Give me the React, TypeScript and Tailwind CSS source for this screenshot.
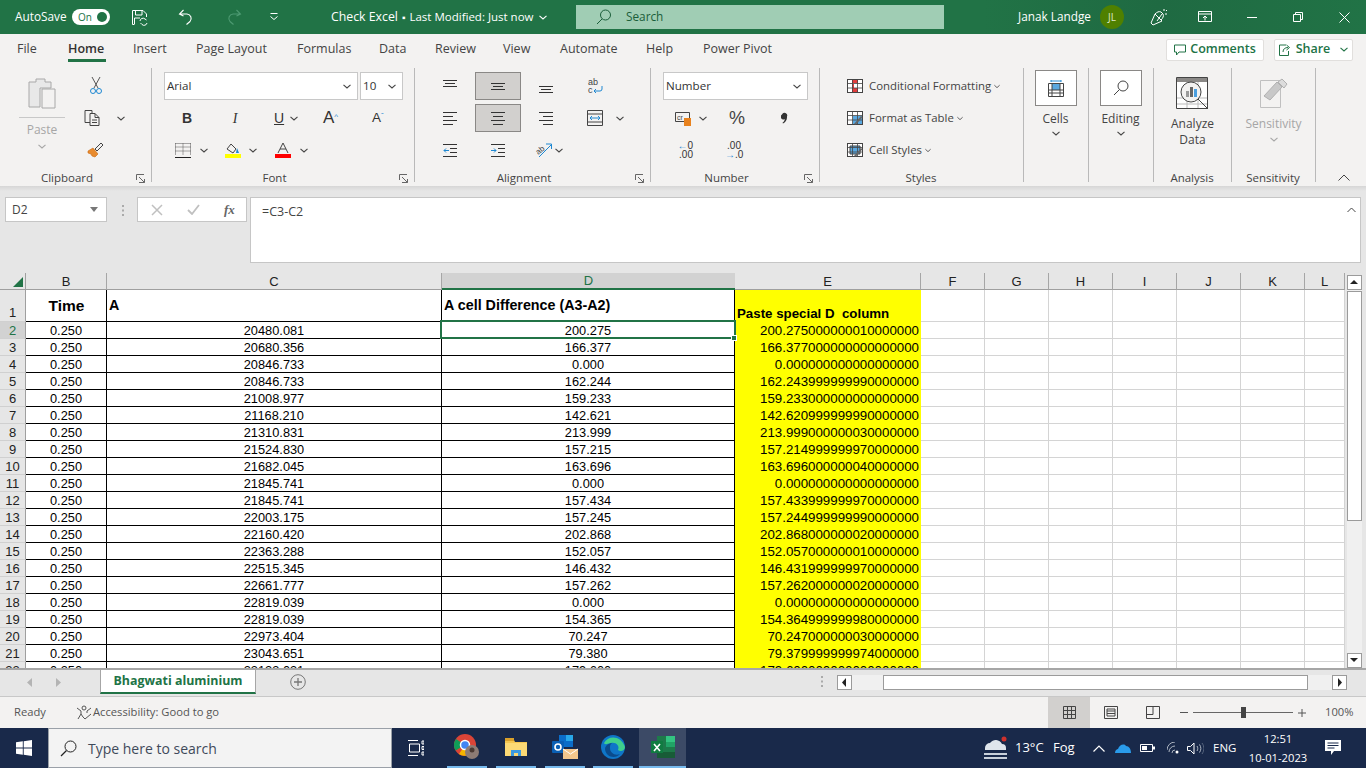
import type { ReactNode } from "react";

const CELLFONT = "font-['Liberation_Sans',Arial,sans-serif]";
const COLS = "grid grid-cols-[26px_81px_335px_293px_186px_64px_64px_64px_64px_64px_64px_40px]";

type Row = { n: number; c: string; d: string; e: string };

const ROWS: Row[] = [
	{ n: 2, c: "20480.081", d: "200.275", e: "200.275000000010000000" },
	{ n: 3, c: "20680.356", d: "166.377", e: "166.377000000000000000" },
	{ n: 4, c: "20846.733", d: "0.000", e: "0.000000000000000000" },
	{ n: 5, c: "20846.733", d: "162.244", e: "162.243999999990000000" },
	{ n: 6, c: "21008.977", d: "159.233", e: "159.233000000000000000" },
	{ n: 7, c: "21168.210", d: "142.621", e: "142.620999999990000000" },
	{ n: 8, c: "21310.831", d: "213.999", e: "213.999000000030000000" },
	{ n: 9, c: "21524.830", d: "157.215", e: "157.214999999970000000" },
	{ n: 10, c: "21682.045", d: "163.696", e: "163.696000000040000000" },
	{ n: 11, c: "21845.741", d: "0.000", e: "0.000000000000000000" },
	{ n: 12, c: "21845.741", d: "157.434", e: "157.433999999970000000" },
	{ n: 13, c: "22003.175", d: "157.245", e: "157.244999999990000000" },
	{ n: 14, c: "22160.420", d: "202.868", e: "202.868000000020000000" },
	{ n: 15, c: "22363.288", d: "152.057", e: "152.057000000010000000" },
	{ n: 16, c: "22515.345", d: "146.432", e: "146.431999999970000000" },
	{ n: 17, c: "22661.777", d: "157.262", e: "157.262000000020000000" },
	{ n: 18, c: "22819.039", d: "0.000", e: "0.000000000000000000" },
	{ n: 19, c: "22819.039", d: "154.365", e: "154.364999999980000000" },
	{ n: 20, c: "22973.404", d: "70.247", e: "70.247000000030000000" },
	{ n: 21, c: "23043.651", d: "79.380", e: "79.379999999974000000" },
	{ n: 22, c: "23123.031", d: "179.600", e: "179.600000000000000000" },
];

const TABS = [
	{ label: "File", cls: "w-[51px]" },
	{ label: "Home", cls: "w-[65px] font-semibold text-[#323130]" },
	{ label: "Insert", cls: "w-[63px]" },
	{ label: "Page Layout", cls: "w-[101px]" },
	{ label: "Formulas", cls: "w-[82px]" },
	{ label: "Data", cls: "w-[56px]" },
	{ label: "Review", cls: "w-[68px]" },
	{ label: "View", cls: "w-[57px]" },
	{ label: "Automate", cls: "w-[86px]" },
	{ label: "Help", cls: "w-[57px]" },
	{ label: "Power Pivot", cls: "w-[80px]" },
];

const Chev = ({ cls = "", color = "#444" }: { cls?: string; color?: string }) => (
	<svg width="8" height="5" viewBox="0 0 8 5" className={`shrink-0 ${cls}`}>
		<path d="M.5.8 4 4 7.500.8" fill="none" stroke={color} strokeWidth="1.100" />
	</svg>
);

const Launcher = () => (
	<svg width="9" height="9" viewBox="0 0 9 9">
		<path d="M.5 6V.5H8M8.500 8.500H3M3 3l5 5M8.500 5v3.500H5" fill="none" stroke="#666" />
	</svg>
);

const Lines = ({ cls = "", rows }: { cls?: string; rows: [number, number, number][] }) => (
	<svg width="14" height="13" viewBox="0 0 14 13" className={`shrink-0 ${cls}`}>
		{rows.map(([y, a, b]) => (
			<path key={y} d={`M${a} ${y}.5H${b}`} stroke="#333" />
		))}
	</svg>
);

const TOP: [number, number, number][] = [[0, 0, 14], [3, 2, 12], [6, 0, 14]];
const MID: [number, number, number][] = [[3, 0, 14], [6, 2, 12], [9, 0, 14]];
const BOT: [number, number, number][] = [[6, 0, 14], [9, 2, 12], [12, 0, 14]];
const LEFT: [number, number, number][] = [[0, 0, 14], [4, 0, 10], [8, 0, 14], [12, 0, 10]];
const CENTER: [number, number, number][] = [[0, 0, 14], [4, 2, 12], [8, 0, 14], [12, 2, 12]];
const RIGHT: [number, number, number][] = [[0, 0, 14], [4, 4, 14], [8, 0, 14], [12, 4, 14]];

const Indent = ({ cls = "", out }: { cls?: string; out?: boolean }) => (
	<svg width="14" height="13" viewBox="0 0 14 13" className={`shrink-0 ${cls}`}>
		<path d="M0 .5h14M7 4.500h7M7 8.500h7M0 12.500h14" stroke="#333" />
		<path d={out ? "M6 6.500H1M3 4.500l-2 2 2 2" : "M0 6.500h5M3 4.500l2 2-2 2"} fill="none" stroke="#1e88d2" />
	</svg>
);

const StyleIcon = ({ kind }: { kind: "cond" | "table" | "cell" }) => (
	<svg width="16" height="14" viewBox="0 0 16 14" className="shrink-0">
		<rect x=".5" y=".5" width="15" height="13" fill="#fff" stroke="#444" />
		{kind === "cond" && <path d="M5 1h6v3H5zM5 5h2v4H5zM5 9h6v4H5z" fill="#e23c3c" />}
		{kind === "table" && <path d="M6 5h9v8H6z" fill="#5aa8e0" />}
		{kind === "cell" && <path d="M3 3h10v8H3z" fill="#5aa8e0" stroke="#444" />}
		<path d="M.5 4.500h15M.5 9h15M5.500.5v13M10.500.5v13" stroke="#444" strokeWidth=".8" />
		{kind !== "cond" && <path d="M7 13 14 5l1.500 1.300L9 13.500z" fill="#666" />}
	</svg>
);

const Group = ({ cls, label, launcher, children }: { cls: string; label: string; launcher?: boolean; children: ReactNode }) => (
	<div className={`flex shrink-0 flex-col border-r border-[#b9b9b9] ${cls}`}>
		<div className="min-h-0 flex-1">{children}</div>
		<div className="flex h-[16px] translate-y-[4px] items-center pr-[3px] pl-[2px] text-[11.500px] leading-none text-[#444]">
			<span className="flex-1 text-center">{label}</span>
			{launcher && (
				<span className="flex w-[16px] justify-center">
					<Launcher />
				</span>
			)}
		</div>
	</div>
);

const RibbonRow = ({ children, cls = "" }: { children: ReactNode; cls?: string }) => (
	<div className={`flex h-[28px] items-center ${cls}`}>{children}</div>
);

const Select = ({ text, cls }: { text: string; cls: string }) => (
	<div className={`flex h-[28px] items-center justify-between border border-[#c8c8c8] bg-white pr-[6px] pl-[2px] text-[11.600px] text-[#333] ${cls}`}>
		<span>{text}</span>
		<Chev />
	</div>
);

const ScrollBtn = ({ dir, cls }: { dir: "up" | "down" | "left" | "right"; cls: string }) => {
	const pts = { up: "1,6 9,6 5,2", down: "1,2 9,2 5,6", left: "6,0 6,9 2,4.500", right: "3,0 3,9 7,4.500" }[dir];
	return (
		<div className={`flex shrink-0 items-center justify-center border border-[#9b9b9b] bg-white ${cls}`}>
			<svg width="10" height="9" viewBox="0 0 10 9">
				<polygon points={pts} fill="#222" />
			</svg>
		</div>
	);
};

const TitleBar = () => (
	<div className="flex h-[34px] shrink-0 items-center bg-[linear-gradient(90deg,#217346_72%,#1f6a42_85%,#217346_100%)] text-[11.800px] text-white [&>*]:shrink-0">
		<span className="ml-[15px] w-[57px]">AutoSave</span>
		<div className="flex h-[16px] w-[38px] items-center justify-between rounded-full bg-white pr-[3px] pl-[6px] text-[10px] text-[#217346]">
			<span>On</span>
			<span className="size-[10px] rounded-full bg-[#217346]" />
		</div>
		<svg width="17" height="17" viewBox="0 0 17 17" className="ml-[21px]">
			<path d="M3.500 15.500H1.500V1.500H12L15.500 5V8M4.500 1.500V6H11V1.500M3.500 15V9H9" fill="none" stroke="#fff" />
			<path d="M9 12a3 3 0 0 1 5-2l1.500 1M16 14a3 3 0 0 1-5 1.500L9.500 14" fill="none" stroke="#fff" />
		</svg>
		<svg width="16" height="16" viewBox="0 0 16 16" className="ml-[30px]">
			<path d="M5.500 1 1.500 5l4 2M2 5h7a4.500 4.500 0 0 1 3 7.500L8.500 15.500" fill="none" stroke="#fff" strokeWidth="1.100" />
		</svg>
		<svg width="16" height="16" viewBox="0 0 16 16" className="ml-[32px]">
			<path d="M10.500 1l4 4-4 2M14 5H7a4.500 4.500 0 0 0-3 7.500l3.500 3" fill="none" stroke="#4d9a72" strokeWidth="1.100" />
		</svg>
		<svg width="8" height="8" viewBox="0 0 8 8" className="ml-[28px]">
			<path d="M.5.500h7M.5 3.500 4 6.500l3.500-3" fill="none" stroke="#fff" />
		</svg>
		<div className="ml-[53px] flex w-[245px] items-center whitespace-nowrap">
			<span className="text-[12.300px]">Check Excel</span>
			<span className="mx-[4px] text-[10px]">▪</span>
			<span className="text-[11.500px]">Last Modified: Just now</span>
			<Chev cls="ml-[4px] w-[10px]" color="#fff" />
		</div>
		<div className="flex h-[24px] w-[368px] items-center bg-[#a0cdb4] text-[#1b5e3a]">
			<svg width="16" height="16" viewBox="0 0 16 16" className="ml-[20px]">
				<circle cx="9.500" cy="6" r="5" fill="none" stroke="#1b5e3a" />
				<path d="M6 10 1 15" stroke="#1b5e3a" />
			</svg>
			<span className="ml-[14px]">Search</span>
		</div>
		<span className="ml-[74px] w-[82px]">Janak Landge</span>
		<span className="flex size-[24px] items-center justify-center rounded-full bg-[#4f8000] text-[10px] text-[#dfe8c8]">JL</span>
		<svg width="18" height="18" viewBox="0 0 18 18" className="ml-[26px]">
			<path d="M1 15 5 6l7 7-9 4zM5 6c2-2 4-3 6-2l2 2c1 2 0 4-2 6M7 13l5-7" fill="none" stroke="#fff" />
			<path d="M14 1v2M16 3l1-1M15 6h2" stroke="#fff" />
		</svg>
		<svg width="14" height="12" viewBox="0 0 14 12" className="ml-[30px]">
			<path d="M.5.500h13v10H.5zM.5 3h13M7 9.500V5M5 7l2-2 2 2" fill="none" stroke="#fff" />
		</svg>
		<span className="ml-[35px] h-px w-[10px] bg-white" />
		<svg width="10" height="10" viewBox="0 0 10 10" className="ml-[36px]">
			<path d="M.5 2.500h7v7h-7zM2.500 2.500v-2h7v7h-2" fill="none" stroke="#fff" />
		</svg>
		<svg width="11" height="11" viewBox="0 0 11 11" className="ml-[36px]">
			<path d="M.5.500l10 10M10.500.5l-10 10" stroke="#fff" />
		</svg>
	</div>
);

const TabRow = () => (
	<div className="flex h-[31px] shrink-0 items-center bg-[#f3f2f1] pl-[17px] text-[12.500px] text-[#444]">
		{TABS.map((t) => (
			<span key={t.label} className={`relative flex h-full shrink-0 items-center ${t.cls}`}>
				{t.label}
				{t.label === "Home" && <span className="absolute bottom-[3px] left-0 h-[3px] w-[38px] bg-[#217346]" />}
			</span>
		))}
		<div className="ml-[383px] flex h-[22px] w-[98px] shrink-0 items-center justify-center gap-[4px] rounded-[2px] border border-[#e1dfdd] bg-white font-semibold text-[#217346]">
			<svg width="12" height="12" viewBox="0 0 12 12">
				<path d="M.5 1h11v7H5L2.500 11V8h-2z" fill="none" stroke="#217346" />
			</svg>
			Comments
		</div>
		<div className="ml-[10px] flex h-[22px] w-[79px] shrink-0 items-center justify-center gap-[5px] rounded-[2px] border border-[#e1dfdd] bg-white font-semibold text-[#217346]">
			<svg width="12" height="12" viewBox="0 0 12 12">
				<path d="M7 1H.5v10.500h9V7M4 8c0-3 2-4.500 5-4.500M7.500 1 10.500 3.500 7.500 6" fill="none" stroke="#217346" />
			</svg>
			Share
			<Chev cls="ml-[5px]" color="#217346" />
		</div>
	</div>
);

const Ribbon = () => (
	<div className="flex h-[121px] shrink-0 bg-[#f3f2f1] pt-[3px] pb-[4px] text-[#333]">
		<Group cls="w-[152px]" label="Clipboard" launcher>
			<div className="flex">
				<div className="flex w-[84px] flex-col items-center pt-[10px] text-[#a6a6a6]">
					<svg width="28" height="32" viewBox="0 0 28 32">
						<path d="M1 4h7V1h9v3h6v6H12v19H1z" fill="#e8e8e8" stroke="#a8a8a8" />
						<path d="M14 11h13v19H14z" fill="#f3f2f1" stroke="#a8a8a8" />
					</svg>
					<span className="mt-[7px] h-px w-[46px] bg-[#c8c8c8]" />
					<span className="mt-[5px] text-[12px] leading-[14px]">Paste</span>
					<Chev cls="mt-[7px]" color="#a6a6a6" />
				</div>
				<div className="flex flex-col gap-[4px] pt-[4px]">
					<RibbonRow>
						<svg width="12" height="18" viewBox="0 0 12 18" className="ml-[6px]">
							<path d="M2 0l6 11M10 0 4 11" stroke="#555" />
							<circle cx="3" cy="14" r="2.500" fill="none" stroke="#1e88d2" />
							<circle cx="9" cy="14" r="2.500" fill="none" stroke="#1e88d2" />
						</svg>
					</RibbonRow>
					<RibbonRow>
						<svg width="16" height="16" viewBox="0 0 16 16">
							<path d="M6 12.500H1V.5h7v3M6 3.500h5l4 4v8H6zM11 3.500v4h4M8 10h5M8 12.500h5" fill="none" stroke="#444" />
						</svg>
						<Chev cls="ml-[17px]" />
					</RibbonRow>
					<RibbonRow>
						<svg width="16" height="16" viewBox="0 0 16 16" className="ml-[3px]">
							<path d="M1 9l5-3 5 6-3 3-3-1-1-2-3-1z" fill="#e88b2e" stroke="#c96a10" strokeWidth=".6" />
							<path d="M8 7l6-6 2 2-6 6z" fill="none" stroke="#444" />
						</svg>
					</RibbonRow>
				</div>
			</div>
		</Group>

		<Group cls="w-[263px]" label="Font" launcher>
			<div className="flex flex-col gap-[4px] pt-[4px]">
				<div className="flex gap-[2px] pl-[12px]">
					<Select text="Arial" cls="w-[194px]" />
					<Select text="10" cls="w-[43px]" />
				</div>
				<RibbonRow cls="text-[14px]">
					<span className={`ml-[30px] w-[10px] text-center font-bold ${CELLFONT}`}>B</span>
					<span className="ml-[38px] w-[10px] text-center font-['Liberation_Serif',serif] italic">I</span>
					<span className={`ml-[34px] w-[10px] text-center underline ${CELLFONT}`}>U</span>
					<Chev cls="ml-[6px]" />
					<span className={`ml-[25px] w-[20px] text-[17px] ${CELLFONT}`}>
						A<sup className="text-[8px] text-[#1e88d2]">^</sup>
					</span>
					<span className={`ml-[29px] w-[20px] text-[13.500px] ${CELLFONT}`}>
						A<sup className="text-[8px] text-[#1e88d2]">ˇ</sup>
					</span>
				</RibbonRow>
				<RibbonRow>
					<svg width="16" height="15" viewBox="0 0 16 15" className="ml-[23px]">
						<path d="M.5.500h15M.5 4h15M.5 8h15M8 .5v12M.5.500v12M15.500.5v12" fill="none" stroke="#555" strokeDasharray="1 1" />
						<path d="M0 14.500h16" stroke="#222" />
					</svg>
					<Chev cls="ml-[9px]" />
					<svg width="16" height="16" viewBox="0 0 16 16" className="ml-[17px]">
						<path d="M2 7 6 2l5 5-3 4z" fill="none" stroke="#444" />
						<path d="M12 6l2 5h-3z" fill="#1e88d2" />
						<rect y="12" width="16" height="4" fill="#ffff00" />
					</svg>
					<Chev cls="ml-[8px]" />
					<svg width="16" height="16" viewBox="0 0 16 16" className="ml-[18px]">
						<path d="M3 11 8 1l5 10M5 7h6" fill="none" stroke="#444" />
						<rect y="12" width="16" height="4" fill="#ff0000" />
					</svg>
					<Chev cls="ml-[9px]" />
				</RibbonRow>
			</div>
		</Group>

		<Group cls="w-[236px]" label="Alignment" launcher>
			<div className="flex flex-col gap-[4px] pt-[4px]">
				<RibbonRow>
					<Lines cls="ml-[28px]" rows={TOP} />
					<div className="ml-[18px] flex h-[28px] w-[46px] items-center justify-center border border-[#8a8886] bg-[#d2d0ce]">
						<Lines rows={MID} />
					</div>
					<Lines cls="ml-[18px]" rows={BOT} />
					<svg width="16" height="16" viewBox="0 0 16 16" className="ml-[34px]">
						<text x="1" y="7" fontSize="9" fill="#444" fontFamily="Liberation Sans">ab</text>
						<text x="1" y="15" fontSize="9" fill="#444" fontFamily="Liberation Sans">c</text>
						<path d="M15 8v3a2 2 0 0 1-2 2H7M9 11l-2 2 2 2" fill="none" stroke="#1e88d2" />
					</svg>
				</RibbonRow>
				<RibbonRow>
					<Lines cls="ml-[28px]" rows={LEFT} />
					<div className="ml-[18px] flex h-[28px] w-[46px] items-center justify-center border border-[#8a8886] bg-[#d2d0ce]">
						<Lines rows={CENTER} />
					</div>
					<Lines cls="ml-[18px]" rows={RIGHT} />
					<svg width="16" height="16" viewBox="0 0 16 16" className="ml-[34px]">
						<path d="M.5.500h15v15H.5zM.5 4h15M.5 12h15" fill="none" stroke="#444" />
						<path d="M3 8h10M5 6 3 8l2 2M11 6l2 2-2 2" fill="none" stroke="#1e88d2" />
					</svg>
					<Chev cls="ml-[13px]" />
				</RibbonRow>
				<RibbonRow>
					<Indent cls="ml-[28px]" out />
					<Indent cls="ml-[34px]" />
					<svg width="18" height="16" viewBox="0 0 18 16" className="ml-[30px]">
						<text x="1" y="11" fontSize="8" fill="#444" fontFamily="Liberation Sans" transform="rotate(-40 5 9)">ab</text>
						<path d="M4 15 16 3M11 2h5.500v5" fill="none" stroke="#1e88d2" />
					</svg>
					<Chev cls="ml-[2px]" />
				</RibbonRow>
			</div>
		</Group>

		<Group cls="w-[169px]" label="Number" launcher>
			<div className="flex flex-col gap-[4px] pt-[4px]">
				<div className="pl-[12px]">
					<Select text="Number" cls="w-[145px]" />
				</div>
				<RibbonRow>
					<svg width="17" height="15" viewBox="0 0 17 15" className="ml-[24px]">
						<path d="M.5 1.500h14v9H.5z" fill="none" stroke="#444" />
						<text x="2" y="9" fontSize="7" fill="#444" fontFamily="Liberation Sans">cr</text>
						<path d="M9 7h7v8H9z" fill="#e8821e" />
					</svg>
					<Chev cls="ml-[7px]" />
					<span className={`ml-[22px] w-[16px] text-center text-[18px] text-[#444] ${CELLFONT}`}>%</span>
					<svg width="8" height="13" viewBox="0 0 8 13" className="ml-[36px]">
						<path d="M1 2.500a2.500 2.500 0 1 1 5 2c.3 3-1.500 5.500-4 7l-.5-.8c1.500-1 2-2 2.300-3.700A2.500 2.500 0 0 1 1 2.500z" fill="#333" />
					</svg>
				</RibbonRow>
				<RibbonRow cls="text-[10px] leading-[9px] text-[#333]">
					<div className={`ml-[26px] w-[16px] text-right ${CELLFONT}`}>
						<span className="text-[#1e88d2]">←</span>0
						<br />
						.00
					</div>
					<div className={`ml-[32px] w-[16px] text-right ${CELLFONT}`}>
						.00
						<br />
						<span className="text-[#1e88d2]">→</span>.0
					</div>
				</RibbonRow>
			</div>
		</Group>

		<Group cls="w-[204px]" label="Styles">
			<div className="flex flex-col gap-[4px] pt-[4px] text-[11.400px] text-[#444]">
				{[
					{ t: "Conditional Formatting", k: "cond" as const },
					{ t: "Format as Table", k: "table" as const },
					{ t: "Cell Styles", k: "cell" as const },
				].map((s) => (
					<RibbonRow key={s.t} cls="pl-[27px]">
						<StyleIcon kind={s.k} />
						<span className="ml-[6px] whitespace-nowrap">{s.t}</span>
						<Chev cls="ml-[3px] w-[6px]" />
					</RibbonRow>
				))}
			</div>
		</Group>

		<Group cls="w-[65px]" label="">
			<div className="flex flex-col items-center pt-[2px] pr-[1px] text-[12px] text-[#444]">
				<div className="flex h-[36px] w-[42px] items-center justify-center border border-[#8a8886] bg-white">
					<svg width="16" height="17" viewBox="0 0 16 17">
						<path d="M3 1h10M3 0v2M13 0v2" stroke="#1e88d2" />
						<path d="M4 4h8v6H4z" fill="#5aa8e0" />
						<path d="M.5 3.500h15v13H.5zM.5 10h15M.5 13h15M4 3.500v13M12 3.500v13" fill="none" stroke="#444" />
					</svg>
				</div>
				<span className="mt-[6px] leading-[14px]">Cells</span>
				<Chev cls="mt-[5px]" />
			</div>
		</Group>

		<Group cls="w-[65px]" label="">
			<div className="flex flex-col items-center pt-[2px] pr-[1px] text-[12px] text-[#444]">
				<div className="flex h-[36px] w-[42px] items-center justify-center border border-[#8a8886] bg-white">
					<svg width="16" height="16" viewBox="0 0 16 16">
						<circle cx="10" cy="6" r="5" fill="none" stroke="#444" />
						<path d="M6.500 9.500 1 15" stroke="#444" />
					</svg>
				</div>
				<span className="mt-[6px] leading-[14px]">Editing</span>
				<Chev cls="mt-[5px]" />
			</div>
		</Group>

		<Group cls="w-[78px]" label="Analysis">
			<div className="flex flex-col items-center pt-[9px] text-[12px] text-[#444]">
				<svg width="33" height="33" viewBox="0 0 33 33">
					<path d="M.5.500h31v31H.5z" fill="#fff" stroke="#444" />
					<path d="M1 1h30v4H1z" fill="#8a8886" />
					<path d="M1 21h30M1 27h30M11 5v26M22 5v26" stroke="#bbb" />
					<circle cx="15" cy="15" r="10" fill="#f3f2f1" stroke="#444" />
					<path d="M10 14h3v6h-3z" fill="#9a9a9a" />
					<path d="M14 10h3v10h-3z" fill="#666" />
					<path d="M18 12h3v8h-3z" fill="#4a9fe0" />
					<path d="m22 22 10 10" stroke="#444" />
				</svg>
				<span className="mt-[6px] text-center leading-[16px]">
					Analyze
					<br />
					Data
				</span>
			</div>
		</Group>

		<Group cls="w-[84px]" label="Sensitivity">
			<div className="flex flex-col items-center pt-[10px] text-[12px] text-[#a6a6a6]">
				<svg width="28" height="30" viewBox="0 0 28 30">
					<path d="M.5 2.500h20v27H.5z" fill="none" stroke="#c0c0c0" />
					<path d="M4 18 17 4l5 5L10 22z" fill="#c8c8c8" stroke="#b0b0b0" />
					<path d="M18 4l4-3 5 5-3 4z" fill="#dcdcdc" stroke="#b0b0b0" />
				</svg>
				<span className="mt-[9px] leading-[14px]">Sensitivity</span>
				<Chev cls="mt-[6px]" color="#a6a6a6" />
			</div>
		</Group>

		<div className="flex flex-1 items-end justify-end pr-[16px] pb-[1px]">
			<svg width="12" height="7" viewBox="0 0 12 7">
				<path d="M.5 6.500 6 1l5.500 5.500" fill="none" stroke="#444" />
			</svg>
		</div>
	</div>
);

const FormulaBar = () => (
	<div className="flex h-[87px] shrink-0 items-start bg-[linear-gradient(#d6d6d6,#e6e6e6_5px)] pt-[11px]">
		<div className="ml-[5px] flex h-[25px] w-[102px] items-center justify-between border border-[#c6c6c6] bg-white pr-[8px] pl-[6px] text-[12px] text-[#444]">
			D2
			<svg width="8" height="5" viewBox="0 0 8 5">
				<polygon points="0,0 8,0 4,5" fill="#777" />
			</svg>
		</div>
		<svg width="2" height="11" viewBox="0 0 2 11" className="mt-[8px] ml-[15px]">
			<path d="M1 0v2M1 4.500v2M1 9v2" stroke="#aaa" strokeWidth="2" />
		</svg>
		<div className="ml-[13px] flex h-[25px] w-[110px] items-center border border-[#c6c6c6] bg-white">
			<svg width="12" height="12" viewBox="0 0 12 12" className="ml-[13px]">
				<path d="M1 1l10 10M11 1 1 11" stroke="#c0c0c0" strokeWidth="1.500" />
			</svg>
			<svg width="13" height="11" viewBox="0 0 13 11" className="ml-[24px]">
				<path d="M1 6l4 4 7-9" fill="none" stroke="#c0c0c0" strokeWidth="1.800" />
			</svg>
			<span className="ml-[24px] font-['Liberation_Serif',serif] text-[13px] font-bold text-[#666] italic">fx</span>
		</div>
		<div className="relative ml-[3px] h-[66px] w-[1111px] border border-[#c6c6c6] bg-white pt-[5px] pl-[11px] text-[12.500px] text-[#444]">
			=C3-C2
			<svg width="9" height="6" viewBox="0 0 9 6" className="absolute top-[9px] right-[4px]">
				<path d="M.5 5 4.500 1l4 4" fill="none" stroke="#444" />
			</svg>
		</div>
	</div>
);

const HEAD = "flex items-center justify-center border-r border-b border-r-[#a6a6a6] border-b-[#9f9f9f] bg-[#e6e6e6] text-[13px] leading-none text-[#222]";
const INK = "border-r border-b border-black";
const GRID = "border-r border-b border-[#d4d4d4]";

const Sheet = () => (
	<div className={`flex h-[395px] shrink-0 bg-white ${CELLFONT}`}>
		<div className="h-full w-[1345px] shrink-0 overflow-hidden">
			<div className={`${COLS} h-[17px]`}>
				<div className="flex items-end justify-end border-r border-b border-[#9f9f9f] bg-[#e6e6e6] p-[2px]">
					<svg width="10" height="10" viewBox="0 0 10 10">
						<polygon points="10,0 10,10 0,10" fill="#217346" />
					</svg>
				</div>
				<div className={HEAD}>B</div>
				<div className={HEAD}>C</div>
				<div className="flex items-center justify-center border-b-2 border-b-[#217346] bg-[#d2d2d2] text-[13px] leading-none text-[#217346]">D</div>
				<div className={HEAD}>E</div>
				{["F", "G", "H", "I", "J", "K", "L"].map((h) => (
					<div key={h} className={HEAD}>{h}</div>
				))}
			</div>
			<div className={`${COLS} h-[32px] text-[13.300px] leading-none font-bold text-black`}>
				<div className="flex items-end justify-center border-r border-b border-r-[#9f9f9f] border-b-[#d0d0d0] bg-[#e6e6e6] pb-[2px] text-[13px] font-normal text-[#222]">1</div>
				<div className={`flex items-center justify-center pl-[1px] text-[15.500px] ${INK}`}>Time</div>
				<div className={`flex items-center pl-[2px] text-[14.300px] ${INK}`}>A</div>
				<div className={`flex items-center pl-[2px] text-[14.300px] ${INK}`}>A cell Difference (A3-A2)</div>
				<div className="flex items-end bg-[#ffff00] pb-[2px] pl-[2px] whitespace-pre">Paste special D  column</div>
				{[0, 1, 2, 3, 4, 5, 6].map((k) => (
					<div key={k} className={GRID} />
				))}
			</div>
			{ROWS.map((r) => (
				<div key={r.n} className={`${COLS} h-[17px] grid-rows-[17px] text-[12.800px] leading-[18px] text-black`}>
					<div className={`flex items-center justify-center border-r border-b border-r-[#9f9f9f] border-b-[#d0d0d0] pt-px text-[13px] ${r.n === 2 ? "bg-[#d2d2d2] text-[#217346]" : "bg-[#e6e6e6] text-[#222]"}`}>{r.n}</div>
					<div className={`text-center ${INK}`}>0.250</div>
					<div className={`text-center ${INK}`}>{r.c}</div>
					<div className={`relative text-center ${INK}`}>
						{r.d}
						{r.n === 2 && (
							<>
								<span className="absolute -top-[2px] -left-[2px] z-10 h-[19px] w-[296px] border-2 border-[#217346]" />
								<span className="absolute -right-[3px] -bottom-[3px] z-10 size-[6px] border border-white bg-[#217346]" />
							</>
						)}
					</div>
					<div className="bg-[#ffff00] pr-[2px] text-right text-[13.300px]">{r.e}</div>
					{[0, 1, 2, 3, 4, 5, 6].map((k) => (
						<div key={k} className={GRID} />
					))}
				</div>
			))}
		</div>
		<div className="flex w-[21px] shrink-0 flex-col items-center bg-[#e6e6e6] pt-[2px] pr-[3px]">
			<ScrollBtn dir="up" cls="h-[15px] w-[15px]" />
			<div className="flex w-[15px] flex-1 flex-col bg-[#f0f0f0]">
				<div className="mt-px h-[230px] border border-[#9b9b9b] bg-white" />
			</div>
			<ScrollBtn dir="down" cls="h-[15px] w-[15px]" />
		</div>
	</div>
);

const SheetTabs = () => (
	<div className="flex h-[29px] shrink-0 items-start border-t-2 border-b border-t-[#a6a6a6] border-b-[#c8c8c8] bg-[#e6e6e6]">
		<svg width="6" height="9" viewBox="0 0 6 9" className="mt-[8px] ml-[27px]">
			<polygon points="5,0 5,9 0,4.500" fill="#b4b4b4" />
		</svg>
		<svg width="6" height="9" viewBox="0 0 6 9" className="mt-[8px] ml-[22px]">
			<polygon points="1,0 1,9 6,4.500" fill="#b4b4b4" />
		</svg>
		<div className="ml-[39px] flex h-[24px] w-[156px] items-center justify-center border-x border-b-2 border-x-[#a6a6a6] border-b-[#217346] bg-white text-[12.400px] font-bold text-[#217346]">
			Bhagwati aluminium
		</div>
		<svg width="16" height="16" viewBox="0 0 16 16" className="mt-[4px] ml-[34px]">
			<circle cx="8" cy="8" r="7.300" fill="none" stroke="#777" />
			<path d="M4 8h8M8 4v8" stroke="#777" strokeWidth="1.300" />
		</svg>
		<svg width="2" height="11" viewBox="0 0 2 11" className="mt-[6px] ml-[515px]">
			<path d="M1 0v2M1 4.500v2M1 9v2" stroke="#aaa" strokeWidth="2" />
		</svg>
		<ScrollBtn dir="left" cls="mt-[5px] ml-[14px] h-[15px] w-[15px]" />
		<div className="mt-[5px] h-[15px] w-[31px] bg-[#f0f0f0]" />
		<div className="mt-[5px] h-[15px] w-[425px] border border-[#9b9b9b] bg-white" />
		<div className="mt-[5px] h-[15px] w-[24px] bg-[#f0f0f0]" />
		<ScrollBtn dir="right" cls="mt-[5px] h-[15px] w-[15px]" />
	</div>
);

const StatusBar = () => (
	<div className="flex h-[31px] shrink-0 items-center bg-[#f3f2f1] text-[11.200px] text-[#555]">
		<span className="ml-[14px] w-[62px]">Ready</span>
		<svg width="16" height="15" viewBox="0 0 16 15">
			<circle cx="8" cy="3" r="2" fill="none" stroke="#555" />
			<path d="M1 3l4 3v3l-3 5M15 3l-4 3v2M5 9l2 3 2 2 6-5" fill="none" stroke="#555" />
		</svg>
		<span className="ml-px w-[955px]">Accessibility: Good to go</span>
		<div className="flex h-full w-[42px] items-center justify-center bg-[#d2d0ce]">
			<svg width="13" height="13" viewBox="0 0 13 13">
				<path d="M.5.500h12v12H.5zM.5 4.500h12M.5 8.500h12M4.500.5v12M8.500.5v12" fill="none" stroke="#444" />
			</svg>
		</div>
		<svg width="14" height="13" viewBox="0 0 14 13" className="ml-[14px]">
			<path d="M.5.500h13v12H.5zM3 3h8v7H3zM3 5h8M3 7.500h8" fill="none" stroke="#444" />
		</svg>
		<svg width="14" height="13" viewBox="0 0 14 13" className="ml-[28px]">
			<path d="M.5.500h13v12H.5zM.5 8.500H7V.5" fill="none" stroke="#444" />
		</svg>
		<span className="ml-[20px] h-px w-[8px] bg-[#555]" />
		<div className="ml-[5px] flex h-[10px] w-[100px] items-center justify-center bg-[linear-gradient(#0000_4.500px,#666_4.500px,#666_5.500px,#0000_5.500px)]">
			<span className="h-[11px] w-[5px] bg-[#444]" />
		</div>
		<svg width="8" height="8" viewBox="0 0 8 8" className="ml-[5px]">
			<path d="M0 4h8M4 0v8" stroke="#555" />
		</svg>
		<span className="ml-[19px]">100%</span>
	</div>
);

const Pin = ({ cls, active, children }: { cls: string; active?: boolean; children: ReactNode }) => (
	<div className={`flex h-full flex-col items-center ${cls} ${active ? "bg-[#3c4a66]" : ""}`}>
		<div className="flex min-h-0 flex-1 items-center justify-center">{children}</div>
		<span className={`h-[2px] bg-[#76b9ed] ${active ? "w-full" : "w-[40px]"}`} />
	</div>
);

const Taskbar = () => (
	<div className="flex h-[40px] shrink-0 items-center bg-[#19294a] text-white [&>*]:shrink-0">
		<svg width="16" height="16" viewBox="0 0 16 16" className="ml-[16px]">
			<path d="M0 2.300 6.800 1.300v6.200H0zM7.700 1.200 16 0v7.500H7.700zM0 8.400h6.800v6.300L0 13.700zM7.700 8.400H16V16L7.700 14.800z" fill="#fff" />
		</svg>
		<div className="ml-[16px] flex h-full w-[344px] items-center border border-[#9aa0a8] bg-[#f3f3f3] text-[14px] text-[#3f4a5a]">
			<svg width="17" height="17" viewBox="0 0 17 17" className="ml-[11px]">
				<circle cx="10.500" cy="6.500" r="5.500" fill="none" stroke="#222" />
				<path d="M6.500 10.500 1 16" stroke="#222" strokeWidth="1.200" />
			</svg>
			<span className="ml-[11px]">Type here to search</span>
		</div>
		<svg width="16" height="16" viewBox="0 0 16 16" className="ml-[16px]">
			<path d="M0 .5h10M0 15.500h10M1.500 4h10v8h-10zM14 1h2v3h-2zM14 6.500h2v3h-2zM14 12h2v3h-2z" fill="none" stroke="#fff" />
		</svg>
		<Pin cls="ml-[19px] w-[48px]">
			<svg width="26" height="26" viewBox="0 0 26 26">
				<circle cx="11" cy="11" r="11" fill="#db4437" />
				<path d="M11 11 1.500 16.500A11 11 0 0 1 2 5z" fill="#0f9d58" />
				<path d="M11 11 21.500 14A11 11 0 0 1 5 20z" fill="#f4b400" />
				<circle cx="11" cy="11" r="4.500" fill="#4285f4" stroke="#fff" strokeWidth="1.500" />
				<circle cx="18" cy="18" r="7" fill="#8d7b74" />
				<circle cx="18" cy="16" r="2.500" fill="#4c3a33" />
			</svg>
		</Pin>
		<Pin cls="w-[49px]">
			<svg width="22" height="18" viewBox="0 0 22 18">
				<path d="M0 2h9l1 2h12v14H0z" fill="#f5c650" />
				<path d="M0 0h9v3H0z" fill="#d9a02b" />
				<path d="M0 5h22v13H0z" fill="#fcd975" />
				<path d="M6 12h10v6h-3v-3H9v3H6z" fill="#3c9ae0" />
			</svg>
		</Pin>
		<Pin cls="w-[49px]">
			<svg width="26" height="24" viewBox="0 0 26 24">
				<path d="M7 0h14v12H7z" fill="#0b6dc9" />
				<path d="M14 0h7v6h-7z" fill="#28a8ea" />
				<rect y="6" width="12" height="12" rx="1" fill="#0a5fb4" />
				<circle cx="6" cy="12" r="3" fill="none" stroke="#fff" strokeWidth="1.600" />
				<path d="M11 14h15v10H11z" fill="#f3c68c" />
				<path d="M11 14l7.500 5L26 14" fill="none" stroke="#fff" />
			</svg>
		</Pin>
		<Pin cls="w-[48px]">
			<svg width="24" height="24" viewBox="0 0 24 24">
				<circle cx="12" cy="12" r="12" fill="#0f76c8" />
				<path d="M3 8C7 0 20 0 24 12c0 4-5 5-7 3 2-4-2-8-7-7C6 9 4 10 3 8z" fill="#3fd08d" />
				<path d="M9 13c0 5 5 8 10 6-4 5-14 4-15-5 0-4 5-6 7-6-2 1-2 3-2 5z" fill="#0b4b8c" />
			</svg>
		</Pin>
		<Pin cls="ml-[2px] w-[47px]" active>
			<svg width="24" height="22" viewBox="0 0 24 22">
				<path d="M6 0h18v22H6z" fill="#1d7a4a" />
				<path d="M15 0h9v6h-9z" fill="#33c481" />
				<path d="M15 6h9v5h-9z" fill="#21a366" />
				<path d="M6 16h18v6H6z" fill="#185c37" />
				<rect y="5" width="12" height="12" fill="#107c41" />
				<path d="M3 8l6 7M9 8l-6 7" stroke="#fff" strokeWidth="1.600" />
			</svg>
		</Pin>
		<svg width="24" height="24" viewBox="0 0 24 24" className="ml-[297px]">
			<path d="M2 12a5 5 0 0 1 5-5 7 7 0 0 1 12 1 4 4 0 0 1 4 4v2H2z" fill="#dfe5ec" />
			<circle cx="21" cy="3" r="2.500" fill="#d0312d" />
			<path d="M1 18h23M1 22h23" stroke="#c8d0da" strokeWidth="2" />
		</svg>
		<span className="ml-[8px] w-[38px] text-[13px]">13°C</span>
		<span className="w-[23px] text-[13px]">Fog</span>
		<svg width="12" height="7" viewBox="0 0 12 7" className="ml-[17px]">
			<path d="M.5 6.500 6 1l5.500 5.500" fill="none" stroke="#fff" strokeWidth="1.200" />
		</svg>
		<svg width="16" height="10" viewBox="0 0 16 10" className="ml-[10px]">
			<path d="M0 10c0-3 2-4 3-4 1-4 6-6 8-3 3 0 5 3 5 7z" fill="#2a9bea" />
		</svg>
		<svg width="15" height="8" viewBox="0 0 15 8" className="ml-[9px]">
			<path d="M.5.500h12v7H.5z" fill="none" stroke="#fff" />
			<path d="M2 2h5v4H2z" fill="#fff" />
			<path d="M13 2.500h2v3h-2z" fill="#fff" />
		</svg>
		<svg width="12" height="12" viewBox="0 0 12 12" className="ml-[12px]">
			<path d="M0 8a8 8 0 0 1 8-8M2 10a6 6 0 0 1 6-6M5 11a3 3 0 0 1 3-3" fill="none" stroke="#aeb6c2" />
			<circle cx="10" cy="10" r="1.500" fill="#fff" />
		</svg>
		<svg width="17" height="13" viewBox="0 0 17 13" className="ml-[8px]">
			<path d="M.5 4.500h3L7 1v11L3.500 8.500h-3z" fill="none" stroke="#fff" />
			<path d="M10 4c1 1.500 1 3.500 0 5M12.500 2.500c1.800 2.500 1.800 5.500 0 8" fill="none" stroke="#aeb6c2" />
			<path d="M15 1c2.500 3.500 2.500 7.500 0 11" fill="none" stroke="#5a6880" />
		</svg>
		<span className="ml-[9px] w-[24px] text-[11.500px]">ENG</span>
		<div className="ml-px flex w-[80px] flex-col items-center text-[11.200px] leading-[19px]">
			<span>12:51</span>
			<span>10-01-2023</span>
		</div>
		<svg width="16" height="16" viewBox="0 0 16 16" className="ml-[7px]">
			<path d="M0 0h16v11H9l-3 4v-4H0z" fill="#fff" />
			<path d="M2.500 3h11M2.500 5.500h11M2.500 8h7" stroke="#19294a" />
		</svg>
	</div>
);

export default function App() {
	return (
		<div className="flex h-[768px] w-[1366px] flex-col overflow-hidden font-['Open_Sans',sans-serif]">
			<TitleBar />
			<TabRow />
			<Ribbon />
			<FormulaBar />
			<Sheet />
			<SheetTabs />
			<StatusBar />
			<Taskbar />
		</div>
	);
}
